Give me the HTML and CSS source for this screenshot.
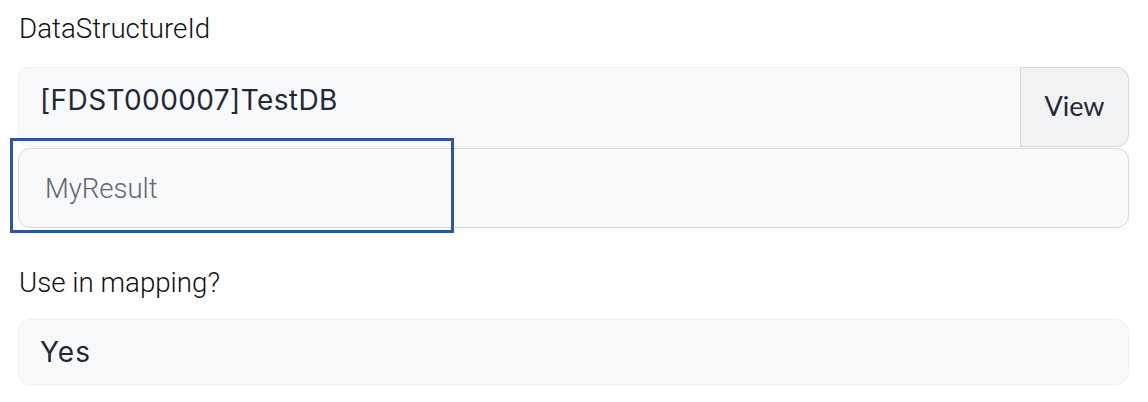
FILE: index.html
```html
<!DOCTYPE html>
<html lang="en">
<head>
<meta charset="utf-8">
<title>Form</title>
<link rel="stylesheet" href="styles.css">
</head>
<body>
<div class="form">
  <div class="field-label first">DataStructureId</div>
  <div class="input-group">
    <div class="readonly-value">[FDST000007]TestDB</div>
    <div class="view-btn">View</div>
  </div>
  <div class="text-input">
    <span class="placeholder">MyResult</span>
    <div class="highlight"></div>
  </div>
  <div class="field-label second">Use in mapping?</div>
  <div class="static-value">Yes</div>
</div>
</body>
</html>
```
FILE: styles.css
```css
html, body {
  margin: 0;
  padding: 0;
  background: #ffffff;
}
.form {
  padding: 0 19px 0 18px;
  font-family: Roboto, "Liberation Sans", sans-serif;
}
.field-label {
  font-family: Roboto, "Liberation Sans", sans-serif;
  font-size: 27.7px;
  font-weight: 300;
  line-height: 32px;
  color: #111111;
  padding-left: 1px;
}
.field-label.first {
  margin-top: 13px;
  margin-bottom: 22px;
}
.field-label.second {
  margin-top: 39px;
  margin-bottom: 20px;
}
.input-group {
  display: flex;
  height: 80px;
}
.readonly-value {
  flex: 1;
  box-sizing: border-box;
  background: #f8f9fa;
  border: 1px solid #eef0f2;
  border-right: none;
  border-radius: 12px 0 0 12px;
  padding: 15px 0 0 21px;
  font-family: Inter, "Noto Sans", sans-serif;
  font-size: 28px;
  line-height: 34px;
  color: #1f2937;
  letter-spacing: 0.4px;
}
.view-btn {
  width: 109px;
  box-sizing: border-box;
  background: #f1f2f4;
  border: 1px solid #d4d7dc;
  border-radius: 0 12px 12px 0;
  display: flex;
  align-items: center;
  justify-content: center;
  padding-bottom: 3px;
  font-family: Lato, Inter, sans-serif;
  font-size: 27px;
  color: #1f2937;
}
.text-input {
  position: relative;
  margin-top: 1px;
  height: 80px;
  box-sizing: border-box;
  background: #f8f9fa;
  border: 1px solid #d4d7dc;
  border-radius: 12px;
  display: flex;
  align-items: center;
  padding-left: 26px;
}
.placeholder {
  font-family: Roboto, "Liberation Sans", sans-serif;
  font-size: 27.5px;
  font-weight: 300;
  color: #5f6673;
}
.highlight {
  position: absolute;
  left: -9px;
  top: -11px;
  width: 444px;
  height: 95px;
  box-sizing: border-box;
  border: 3px solid #2f54a5;
}
.static-value {
  height: 66px;
  box-sizing: border-box;
  background: #f8f9fa;
  border: 1px solid #f0f1f3;
  border-radius: 12px;
  display: flex;
  align-items: center;
  padding-left: 21px;
  font-family: Inter, "Noto Sans", sans-serif;
  font-size: 28px;
  color: #1f2937;
  letter-spacing: 1px;
}
```
